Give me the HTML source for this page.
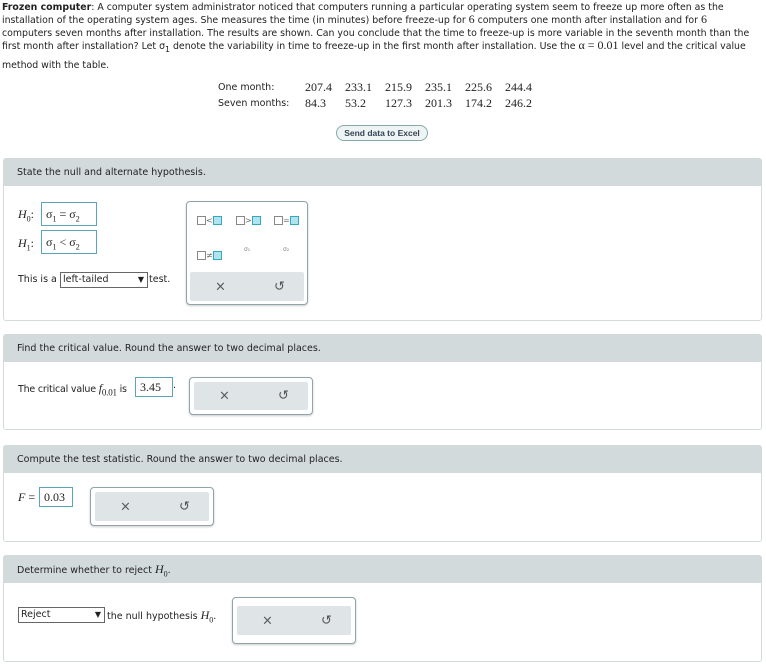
<!DOCTYPE html>
<html><head><style>
body{margin:0;width:766px;height:664px;background:#fff;font-family:"DejaVu Sans","Liberation Sans",sans-serif;font-size:9.5px;color:#222;position:relative;overflow:hidden}
.a{position:absolute;white-space:nowrap}
.ser{font-family:"Liberation Serif",serif;font-size:12px}
.panel{position:absolute;left:3px;width:757px;border:1px solid #d3dadc;border-radius:3px}
.hd{background:#d3dadc;height:27px;line-height:27px;padding-left:13px;font-size:9.5px}
.tb{position:absolute;border:1px solid #8fa3aa;border-radius:4px;background:#fff;box-shadow:0 1px 2px #ccc}
.gb{position:absolute;background:#dfe5e7;border-radius:2px}
.gb span{position:absolute;top:50%;transform:translateY(-50%);color:#555;font-size:13px}
.inp{position:absolute;border:1px solid #5aa6b8;background:#fff;font-family:"Liberation Serif",serif;font-size:12px;padding:0 4px}
.sel{position:absolute;border:1px solid #666;height:14px;line-height:14px;font-size:9.5px;padding-left:2px;background:#fff}
.sel:after{content:"▼";position:absolute;right:3px;font-size:8px}
.k{width:7px;height:7px;display:inline-block;border:1px solid #888;vertical-align:middle}
.kb{width:7px;height:7px;display:inline-block;border:1px solid #3ab;background:#aee3ef;vertical-align:middle}
.p{position:absolute;left:2px;white-space:nowrap;font-size:9.4px;height:13px;line-height:13px}
.p sub{line-height:0}
.p .ser{line-height:0}
</style></head><body>
<div class="p" style="top:1px"><b>Frozen computer</b>: A computer system administrator noticed that computers running a particular operating system seem to freeze up more often as the</div>
<div class="p" style="top:14px">installation of the operating system ages. She measures the time (in minutes) before freeze-up for <span class="ser">6</span> computers one month after installation and for <span class="ser">6</span></div>
<div class="p" style="top:27px">computers seven months after installation. The results are shown. Can you conclude that the time to freeze-up is more variable in the seventh month than the</div>
<div class="p" style="top:40px">first month after installation? Let σ<sub>1</sub> denote the variability in time to freeze-up in the first month after installation. Use the <span class="ser">α = 0.01</span> level and the critical value</div>
<div class="p" style="top:59px">method with the table.</div>
<div class="a" style="left:218px;top:82px">One month:</div>
<div class="a" style="left:218px;top:98px">Seven months:</div>
<div class="a ser" style="left:305px;top:80px">207.4</div><div class="a ser" style="left:345px;top:80px">233.1</div><div class="a ser" style="left:385px;top:80px">215.9</div><div class="a ser" style="left:425px;top:80px">235.1</div><div class="a ser" style="left:465px;top:80px">225.6</div><div class="a ser" style="left:505px;top:80px">244.4</div>
<div class="a ser" style="left:305px;top:96px">84.3</div><div class="a ser" style="left:345px;top:96px">53.2</div><div class="a ser" style="left:385px;top:96px">127.3</div><div class="a ser" style="left:425px;top:96px">201.3</div><div class="a ser" style="left:465px;top:96px">174.2</div><div class="a ser" style="left:505px;top:96px">246.2</div>
<div class="a" style="left:336px;top:125px;width:90px;height:14px;border:1px solid #8aa;border-radius:8px;background:#eef3f4;text-align:center;line-height:14px;font-family:'Liberation Sans',sans-serif;font-size:8.5px;font-weight:bold;color:#345">Send data to Excel</div>

<div class="panel" style="top:158px;height:161px"><div class="hd">State the null and alternate hypothesis.</div></div>
<div class="a ser" style="left:18px;top:207px"><i>H</i><sub style="font-size:8px">0</sub>:</div>
<div class="inp" style="left:41px;top:202px;width:46px;height:22px;line-height:22px">σ<sub style="font-size:8px">1</sub> = σ<sub style="font-size:8px">2</sub></div>
<div class="a ser" style="left:18px;top:236px"><i>H</i><sub style="font-size:8px">1</sub>:</div>
<div class="inp" style="left:41px;top:230px;width:46px;height:22px;line-height:22px">σ<sub style="font-size:8px">1</sub> &lt; σ<sub style="font-size:8px">2</sub></div>
<div class="a" style="left:18px;top:274px">This is a</div>
<div class="sel" style="left:60px;top:272px;width:84px">left-tailed</div>
<div class="a" style="left:149px;top:274px">test.</div>
<div class="tb" style="left:186px;top:201px;width:120px;height:102px">
<div class="a" style="left:10px;top:13px"><span class="k"></span><span style="font-size:8px;color:#666">&lt;</span><span class="kb"></span></div>
<div class="a" style="left:49px;top:13px"><span class="k"></span><span style="font-size:8px;color:#666">&gt;</span><span class="kb"></span></div>
<div class="a" style="left:87px;top:13px"><span class="k"></span><span style="font-size:8px;color:#666">=</span><span class="kb"></span></div>
<div class="a" style="left:10px;top:48px"><span class="k"></span><span style="font-size:8px;color:#666">≠</span><span class="kb"></span></div>
<div class="a" style="left:57px;top:44px;font-size:6px;color:#888">σ₁</div>
<div class="a" style="left:96px;top:44px;font-size:6px;color:#888">σ₂</div>
<div class="gb" style="left:3px;top:70px;width:114px;height:29px"><span style="left:25px">×</span><span style="left:84px">↺</span></div>
</div>

<div class="panel" style="top:334px;height:94px"><div class="hd">Find the critical value. Round the answer to two decimal places.</div></div>
<div class="a" style="left:18px;top:381px;letter-spacing:-0.2px">The critical value <span class="ser"><i>f</i><sub style="font-size:9px">0.01</sub></span> is</div>
<div class="inp" style="left:135px;top:377px;width:28px;height:18px;line-height:18px">3.45</div>
<div class="a" style="left:173px;top:380px">.</div>
<div class="tb" style="left:189px;top:377px;width:122px;height:36px"><div class="gb" style="left:4px;top:4px;width:114px;height:28px"><span style="left:25px">×</span><span style="left:84px">↺</span></div></div>

<div class="panel" style="top:445px;height:95px"><div class="hd">Compute the test statistic. Round the answer to two decimal places.</div></div>
<div class="a ser" style="left:18px;top:490px"><i>F</i> =</div>
<div class="inp" style="left:39px;top:487px;width:24px;height:18px;line-height:18px">0.03</div>
<div class="tb" style="left:90px;top:487px;width:122px;height:37px"><div class="gb" style="left:4px;top:4px;width:114px;height:29px"><span style="left:25px">×</span><span style="left:84px">↺</span></div></div>

<div class="panel" style="top:555px;height:105px"><div class="hd">Determine whether to reject <span class="ser"><i>H</i><sub style="font-size:8px">0</sub></span>.</div></div>
<div class="sel" style="left:18px;top:607px;width:83px">Reject</div>
<div class="a" style="left:107px;top:608px">the null hypothesis <span class="ser"><i>H</i><sub style="font-size:8px">0</sub></span>.</div>
<div class="tb" style="left:232px;top:597px;width:122px;height:45px"><div class="gb" style="left:4px;top:8px;width:114px;height:29px"><span style="left:25px">×</span><span style="left:84px">↺</span></div></div>
</body></html>
